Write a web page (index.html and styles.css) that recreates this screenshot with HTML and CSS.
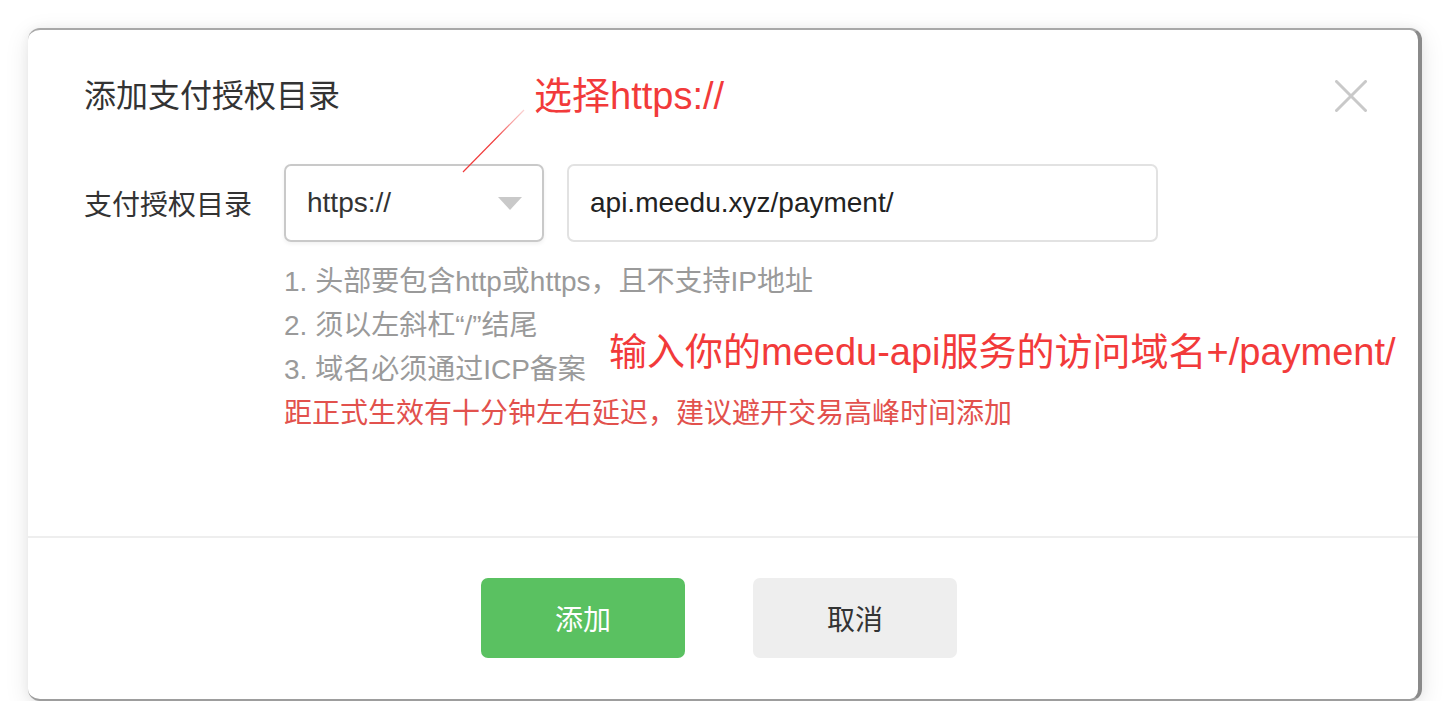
FILE: index.html
```html
<!DOCTYPE html>
<html lang="zh-CN">
<head>
<meta charset="utf-8">
<title>添加支付授权目录</title>
<link rel="stylesheet" href="styles.css">
</head>
<body>
<div class="dialog">
  <div class="dlg-header">
    <div class="dlg-title">添加支付授权目录</div>
    <svg class="dlg-close" width="32" height="32" viewBox="0 0 32 32" aria-label="关闭">
      <path d="M1.5 1.5 L30.5 30.5 M30.5 1.5 L1.5 30.5" stroke="#c9c9c9" stroke-width="3" stroke-linecap="round" fill="none"/>
    </svg>
  </div>
  <div class="dlg-body">
    <div class="form-row">
      <div class="form-label">支付授权目录</div>
      <div class="select">
        <span class="select-value">https://</span>
        <span class="select-caret"></span>
      </div>
      <div class="text-input">api.meedu.xyz/payment/</div>
    </div>
    <div class="hints">
      <div class="hint">1. 头部要包含http或https，且不支持IP地址</div>
      <div class="hint">2. 须以左斜杠“/”结尾</div>
      <div class="hint">3. 域名必须通过ICP备案</div>
      <div class="hint hint-warn">距正式生效有十分钟左右延迟，建议避开交易高峰时间添加</div>
    </div>
  </div>
  <div class="dlg-footer">
    <button class="btn btn-primary">添加</button>
    <button class="btn btn-default">取消</button>
  </div>

  <svg class="note-line" width="80" height="75" viewBox="0 0 80 75">
    <defs>
      <linearGradient id="fade" gradientUnits="userSpaceOnUse" x1="5" y1="67" x2="66" y2="5">
        <stop offset="0" stop-color="#f03a3a"/>
        <stop offset="0.55" stop-color="#f03a3a"/>
        <stop offset="1" stop-color="#f7b5b5" stop-opacity="0.6"/>
      </linearGradient>
    </defs>
    <line x1="5" y1="67" x2="66" y2="5" stroke="url(#fade)" stroke-width="1.2"/>
  </svg>
  <div class="note note-select">选择https://</div>
  <div class="note note-input">输入你的meedu-api服务的访问域名+/payment/</div>
</div>
</body>
</html>
```

FILE: styles.css
```css
* { box-sizing: border-box; }

html, body {
  margin: 0;
  background: #ffffff;
}

body {
  padding: 28px 0 0 28px;
  font-family: "Liberation Sans", "Noto Sans CJK SC", sans-serif;
  color: #333;
}

.dialog {
  position: relative;
  width: 1394px;
  background: #fff;
  border-top: 2px solid #a8a8a8;
  border-right: 4px solid #8a8a8a;
  border-bottom: 2px solid #9d9d9d;
  border-radius: 12px;
  box-shadow: 0 6px 24px rgba(0, 0, 0, 0.10), 0 0 10px rgba(0, 0, 0, 0.05);
}

.dlg-header {
  display: flex;
  align-items: center;
  justify-content: space-between;
  padding: 42px 51px 0 56px;
}

.dlg-title {
  font-size: 32px;
  line-height: 48px;
  color: #333;
}

.dlg-close { display: block; }

.dlg-body {
  padding: 44px 56px 100px 56px;
}

.form-row {
  display: flex;
  align-items: center;
  height: 78px;
}

.form-label {
  width: 200px;
  font-size: 28px;
  color: #333;
}

.select {
  width: 260px;
  height: 78px;
  border: 2px solid #c9c9c9;
  border-radius: 7px;
  box-shadow: 0 2px 4px rgba(0, 0, 0, 0.06);
  display: flex;
  align-items: center;
  justify-content: space-between;
  padding: 0 20px 0 21px;
}

.select-value {
  font-size: 28px;
  color: #333;
}

.select-caret {
  width: 0;
  height: 0;
  border-left: 12.5px solid transparent;
  border-right: 12.5px solid transparent;
  border-top: 13px solid #c9c9c9;
}

.text-input {
  margin-left: 23px;
  width: 591px;
  height: 78px;
  border: 2px solid #e2e2e2;
  border-radius: 7px;
  display: flex;
  align-items: center;
  padding-left: 21px;
  font-size: 28px;
  color: #222;
}

.hints {
  margin-left: 200px;
  margin-top: 18px;
}

.hint {
  font-size: 28px;
  line-height: 44px;
  color: #9a9a9a;
}

.hint-warn {
  color: #e2514d;
}

.dlg-footer {
  border-top: 2px solid #eeeeee;
  display: flex;
  justify-content: center;
  gap: 68px;
  padding: 40px 8px 41px 0;
}

.btn {
  width: 204px;
  height: 80px;
  border: none;
  border-radius: 7px;
  font-family: "Noto Sans CJK SC", sans-serif;
  font-size: 28px;
  padding: 0;
}

.btn-primary {
  background: #5ac161;
  color: #fff;
}

.btn-default {
  background: #eeeeee;
  color: #333;
}

.note {
  position: absolute;
  font-size: 38px;
  line-height: 44px;
  color: #f23a3a;
  white-space: nowrap;
}

.note-select {
  left: 506px;
  top: 44px;
}

.note-input {
  left: 581px;
  top: 300px;
}

.note-line {
  position: absolute;
  left: 430px;
  top: 75px;
}
```
